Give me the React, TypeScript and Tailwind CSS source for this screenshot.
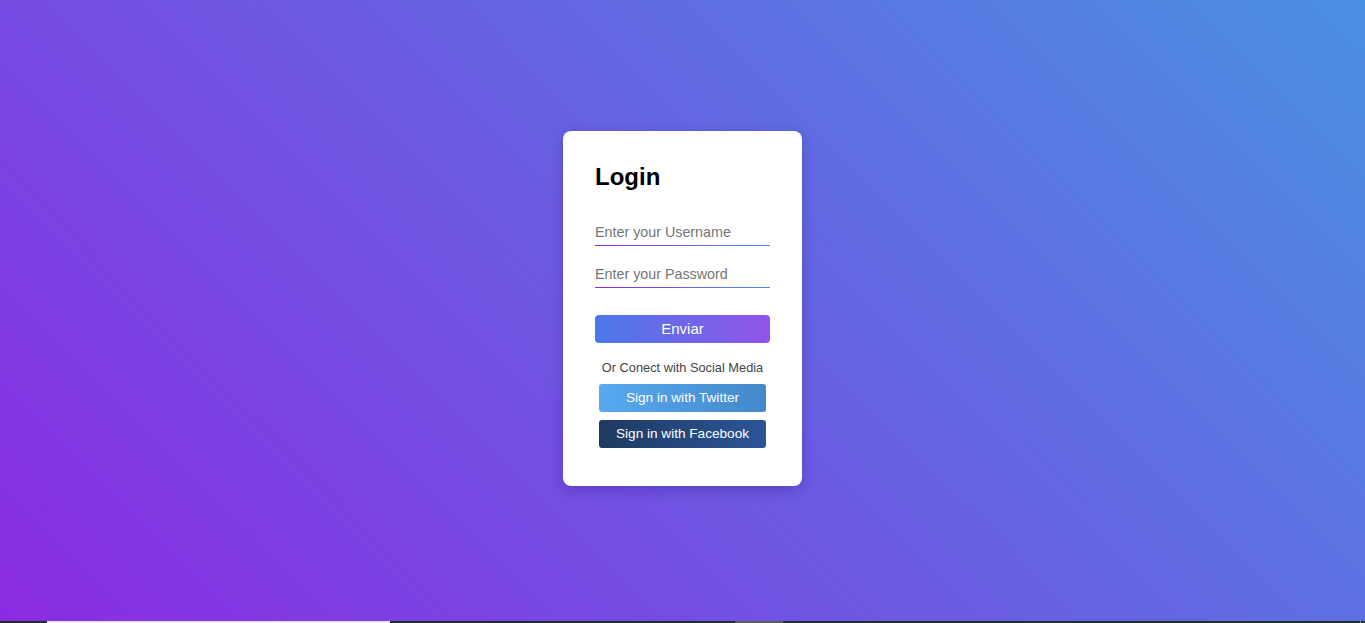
import React from "react";

export default function App() {
  return (
    <div className="w-full h-[623px] overflow-hidden flex flex-col font-['Liberation_Sans',Arial,sans-serif]">
      <div className="h-[621px] w-full bg-[linear-gradient(45deg,#8a2be2,#4a90e2)] flex items-center justify-center pb-[4px]">
        <div className="w-[239px] bg-white rounded-[8px] shadow-[0_4px_14px_rgba(40,20,120,0.3)] pt-[28px] px-8 pb-[38px] flex flex-col">
          <h1 className="text-[24px] font-bold text-black leading-normal">Login</h1>
          <div className="mt-[25px] bg-[linear-gradient(to_right,#8a2be2,#4a90e2)] pb-[1px]">
            <input
              type="text"
              placeholder="Enter your Username"
              className="block w-full bg-white text-[14.3px] leading-4 pt-1 pb-[5px] outline-none placeholder:text-[#757575] text-[#333]"
            />
          </div>
          <div className="mt-[16px] bg-[linear-gradient(to_right,#8a2be2,#4a90e2)] pb-[1px]">
            <input
              type="password"
              placeholder="Enter your Password"
              className="block w-full bg-white text-[14.3px] leading-4 pt-1 pb-[5px] outline-none placeholder:text-[#757575] text-[#333]"
            />
          </div>
          <button className="mt-[27px] h-[28px] w-full rounded-[4px] bg-[linear-gradient(to_right,#4b78e7,#9055e8)] text-white text-[15px] flex items-center justify-center">
            Enviar
          </button>
          <p className="mt-[17px] text-center text-[12.8px] leading-[15px] text-[#444]">Or Conect with Social Media</p>
          <div className="px-1 flex flex-col">
            <button className="mt-[9px] h-[28px] w-full rounded-[3px] bg-[linear-gradient(to_right,#57aaf0,#4388cb)] text-white text-[13.6px] flex items-center justify-center">
              Sign in with Twitter
            </button>
            <button className="mt-[8px] h-[28px] w-full rounded-[3px] bg-[linear-gradient(to_right,#1f3a60,#2b5599)] text-white text-[13.6px] flex items-center justify-center">
              Sign in with Facebook
            </button>
          </div>
        </div>
      </div>
      <div className="h-[2px] w-full bg-[#1f2d36] flex">
        <div className="w-[47px]" />
        <div className="w-[343px] bg-[#e8e8ec]" />
        <div className="w-[345px]" />
        <div className="w-[48px] bg-[#5a5f66]" />
        <div className="flex-1" />
        <div className="w-[1px] bg-[#8a9099]" />
        <div className="w-[4px]" />
      </div>
    </div>
  );
}
